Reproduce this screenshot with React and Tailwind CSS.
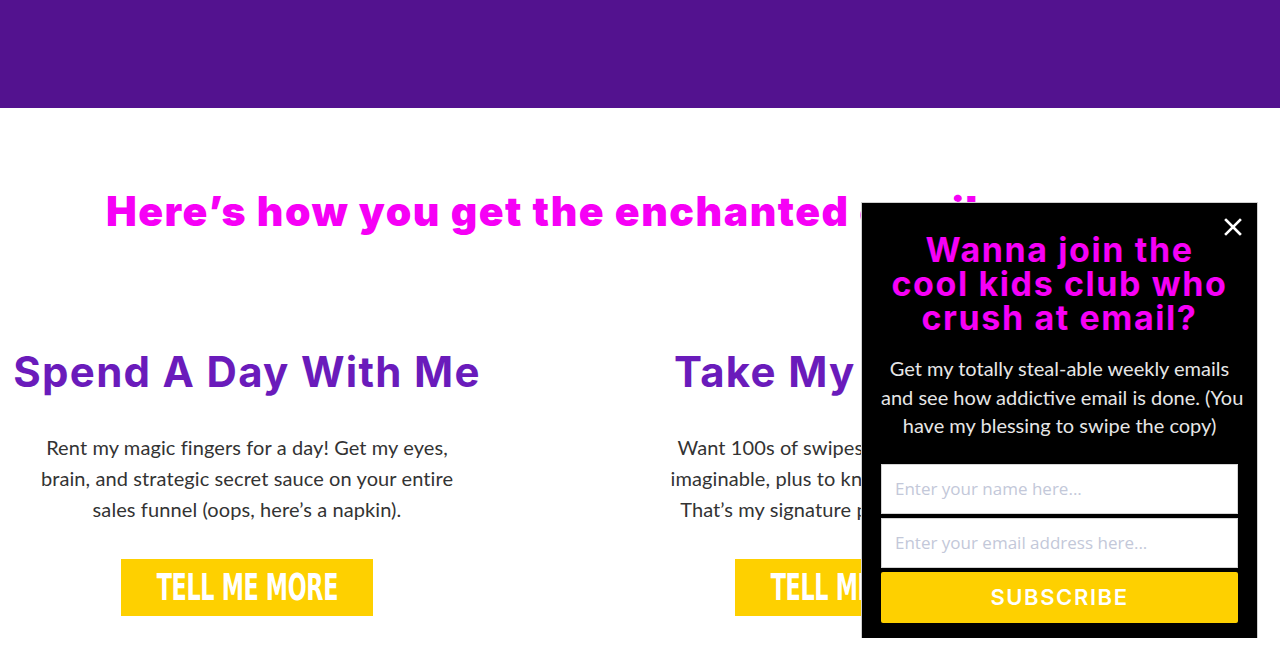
import React from "react";

function Column({ title, lines }) {
  return (
    <div className="w-[494px] shrink-0 flex flex-col items-center">
      <h2 className="font-['Inter',sans-serif] font-bold text-[42px] leading-[48px] text-[#6a1bbb] whitespace-nowrap tracking-[1.3px]">
        {title}
      </h2>
      <p className="mt-[36px] font-['Lato',sans-serif] text-[20px] leading-[31px] text-[#333333] text-center whitespace-nowrap tracking-[0.1px]">
        {lines.map((l, i) => (
          <React.Fragment key={i}>
            {l}
            {i < lines.length - 1 && <br />}
          </React.Fragment>
        ))}
      </p>
      <button className="mt-[34px] w-[252px] h-[57px] bg-[#fed000] flex items-center justify-center">
        <span className="font-['Liberation_Sans_Narrow','DejaVu_Sans_Condensed',sans-serif] font-bold text-[37px] text-white scale-x-[0.67] tracking-[-0.5px] whitespace-nowrap">
          TELL ME MORE
        </span>
      </button>
    </div>
  );
}

export default function App() {
  return (
    <div className="relative w-[1280px] h-[664px] overflow-hidden bg-white">
      <div className="h-[108px] bg-[#53128f]" />
      <div className="pt-[79px] pl-[106px]">
        <h1 className="font-['Inter',sans-serif] font-black text-[41px] leading-[48px] text-[#f600f6] whitespace-nowrap tracking-[1.5px]">
          Here’s how you get the enchanted email:
        </h1>
      </div>
      <div className="mt-[113px] flex gap-[120px]">
        <Column
          title="Spend A Day With Me"
          lines={[
            "Rent my magic fingers for a day! Get my eyes,",
            "brain, and strategic secret sauce on your entire",
            "sales funnel (oops, here’s a napkin).",
          ]}
        />
        <Column
          title="Take My Courses"
          lines={[
            "Want 100s of swipes for every email type",
            "imaginable, plus to know how to write 'em?",
            "That’s my signature program, dear friend.",
          ]}
        />
      </div>

      <div className="absolute left-[861px] top-[202px] w-[397px] h-[436px] bg-black border border-[#cfcfcf] border-b-0 px-[19px]">
        <button className="absolute right-[14px] top-[14px] w-[20px] h-[20px] flex items-center justify-center">
          <svg width="18" height="18" viewBox="0 0 18 18">
            <path d="M2 2 L16 16 M16 2 L2 16" stroke="white" strokeWidth="2.6" strokeLinecap="square" />
          </svg>
        </button>
        <h3 className="pt-[30px] font-['Inter',sans-serif] font-bold text-[34px] leading-[34px] text-[#f600f6] text-center whitespace-nowrap tracking-[1.6px]">
          Wanna join the
          <br />
          cool kids club who
          <br />
          crush at email?
        </h3>
        <p className="mt-[19px] font-['Lato',sans-serif] text-[20px] leading-[28.5px] text-[#e6e6e6] text-center whitespace-nowrap">
          Get my totally steal-able weekly emails
          <br />
          and see how addictive email is done. (You
          <br />
          have my blessing to swipe the copy)
        </p>
        <div className="mt-[24px] flex flex-col gap-[4px]">
          <input
            placeholder="Enter your name here..."
            className="w-[357px] h-[50px] bg-white border border-[#d4d4d4] px-[13px] font-['Open_Sans',sans-serif] text-[17px] placeholder:text-[#c3c8d9] outline-none"
          />
          <input
            placeholder="Enter your email address here..."
            className="w-[357px] h-[50px] bg-white border border-[#d4d4d4] px-[13px] font-['Open_Sans',sans-serif] text-[17px] placeholder:text-[#c3c8d9] outline-none"
          />
          <button className="w-[357px] h-[51px] bg-[#fed000] rounded-[2px] font-['Inter',sans-serif] font-semibold text-[22px] text-white tracking-[1.6px]">
            SUBSCRIBE
          </button>
        </div>
      </div>
    </div>
  );
}
